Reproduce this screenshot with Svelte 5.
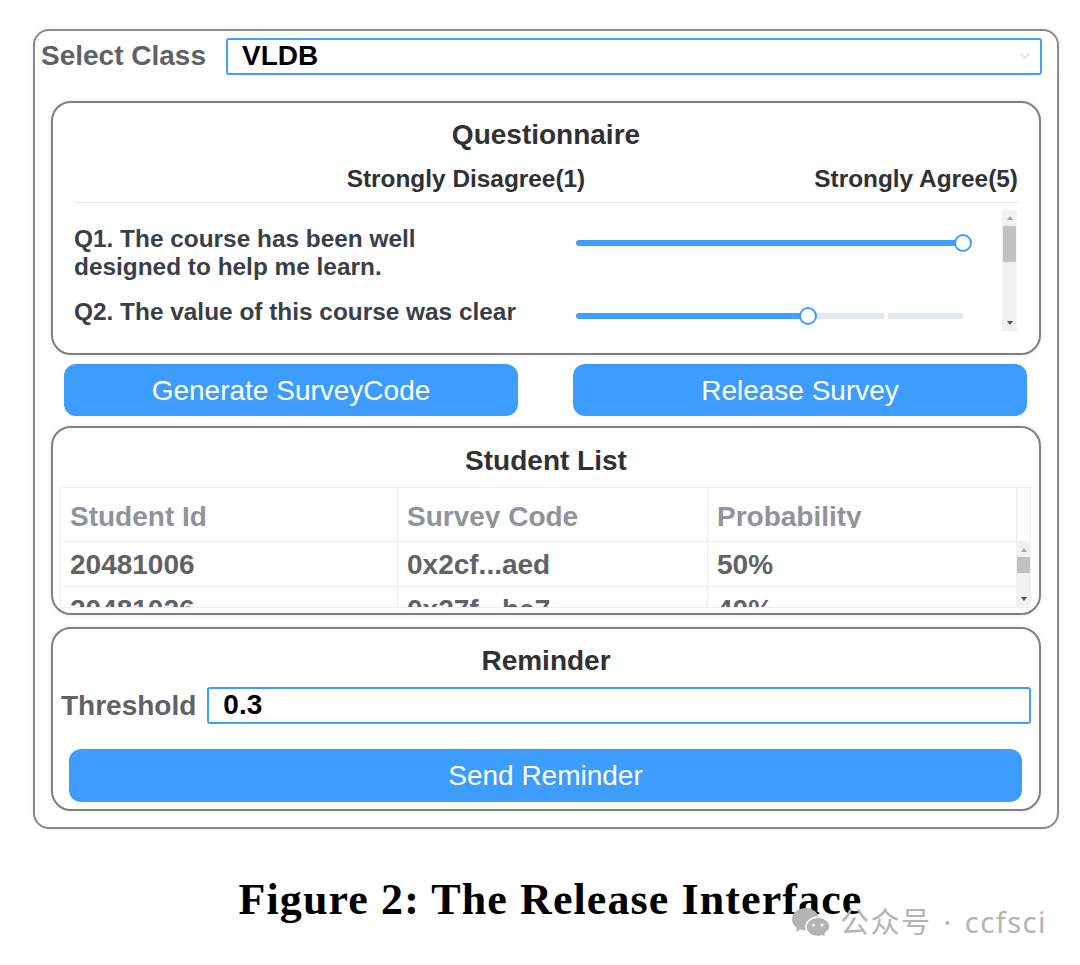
<script lang="ts">
	let selected = $state("VLDB");
	let threshold = $state("0.3");

	const questions = [
		{ lines: ["Q1. The course has been well", "designed to help me learn."], value: 100 },
		{ lines: ["Q2. The value of this course was clear"], value: 60 }
	];

	const students = [
		{ id: "20481006", code: "0x2cf...aed", prob: "50%" },
		{ id: "20481026", code: "0x27f...be7", prob: "40%" }
	];
</script>

<main class="page">
	<div class="panel">
		<div class="class-row">
			<span class="field-label">Select Class</span>
			<div class="select">
				<span>{selected}</span>
				<svg class="chevron" width="12" height="8" viewBox="0 0 12 8">
					<path d="M1.5 1.5 L6 6 L10.5 1.5" fill="none" stroke="#d5d7da" stroke-width="1.2" />
				</svg>
			</div>
		</div>

		<section class="card questionnaire">
			<h3>Questionnaire</h3>
			<div class="scale">
				<span>Strongly Disagree(1)</span>
				<span>Strongly Agree(5)</span>
			</div>
			<div class="q-body">
				<div class="q-list">
					{#each questions as q}
						<div class="q-row">
							<p class="q-text">
								{#each q.lines as line}
									<span>{line}</span>
								{/each}
							</p>
							<div class="slider">
								<div class="track">
									<div class="fill" style="width: {q.value}%"></div>
									{#if q.value < 100}
										<i class="stop" style="left: 79.6%"></i>
									{/if}
								</div>
								<div class="thumb" style="left: {q.value}%"></div>
							</div>
						</div>
					{/each}
				</div>
				<div class="scrollbar q-scroll">
					<span class="arrow up"></span>
					<span class="bar"></span>
					<span class="arrow down"></span>
				</div>
			</div>
		</section>

		<div class="actions">
			<button>Generate SurveyCode</button>
			<button>Release Survey</button>
		</div>

		<section class="card students">
			<h3>Student List</h3>
			<div class="table">
				<div class="thead">
					<div class="cell head"><span>Student Id</span></div>
					<div class="cell head"><span>Survey Code</span></div>
					<div class="cell head"><span>Probability</span></div>
					<div class="cell head gutter"></div>
				</div>
				<div class="tbody">
					<div class="rows">
						{#each students as s}
							<div class="tr">
								<div class="cell">{s.id}</div>
								<div class="cell">{s.code}</div>
								<div class="cell">{s.prob}</div>
							</div>
						{/each}
					</div>
					<div class="scrollbar t-scroll">
						<span class="arrow up"></span>
						<span class="bar"></span>
						<span class="arrow down"></span>
					</div>
				</div>
			</div>
		</section>

		<section class="card reminder">
			<h3>Reminder</h3>
			<div class="threshold-row">
				<span class="field-label">Threshold</span>
				<input class="threshold" bind:value={threshold} />
			</div>
			<button class="send">Send Reminder</button>
		</section>
	</div>

	<h2 class="caption">Figure 2: The Release Interface</h2>

	<div class="watermark">
		<svg width="40" height="30" viewBox="0 0 40 30">
			<path d="M15 1 C7 1 1 6 1 12.500 C1 16 3 19 6 21 L5 25 L9.500 22.500 C11 23 13 23.300 15 23.300 C22 23.300 28 18 28 12 C28 6 22 1 15 1 Z" fill="#b4b4b4" />
			<path d="M27 10 C20.500 10 15 14.500 15 20 C15 25.500 20.500 29.500 27 29.500 C28.500 29.500 30 29.300 31 29 L35 30 L34 26.500 C37 24.500 39 22.500 39 20 C39 14.500 33.500 10 27 10 Z" fill="#b4b4b4" stroke="#fff" stroke-width="1.500" />
			<circle cx="22.500" cy="18" r="1.600" fill="#fff" />
			<circle cx="31" cy="18" r="1.600" fill="#fff" />
		</svg>
		<span>公众号 · ccfsci</span>
	</div>
</main>

<style>
	:global(body) { background: #fff; margin: 0; font-family: "Liberation Sans", Arial, sans-serif; }
	.page { position: relative; width: 1080px; height: 965px; padding: 29px 21px 0 33px; box-sizing: border-box; overflow: hidden; }

	.panel { height: 800px; box-sizing: border-box; border: 2px solid #8a8a8a; border-radius: 16px; padding: 7px 15px 0 6px; box-shadow: 0 0 4px rgba(0,0,0,0.08); }

	.class-row { display: flex; align-items: center; height: 37px; gap: 20px; }
	.field-label { font-size: 28px; font-weight: bold; color: #606266; white-space: nowrap; }
	.class-row .field-label { padding-bottom: 2px; }
	.select { flex: 1; height: 37px; box-sizing: border-box; border: 2px solid #409eff; border-radius: 3px; padding: 0 0 2px 14px; display: flex; align-items: center; justify-content: space-between; font-size: 28px; font-weight: bold; color: #000; }
	.chevron { margin-right: 9px; }

	.card { box-sizing: border-box; width: 990px; margin-left: 10px; background: #fff; border: 2px solid #808080; border-radius: 20px; box-shadow: 0 0 5px rgba(0,0,0,0.1); }
	h3 { margin: 0; text-align: center; font-size: 28px; font-weight: bold; color: #303133; line-height: 32px; }

	.questionnaire { margin-top: 26px; height: 254px; padding: 16px 21px 0; }
	.scale { display: flex; justify-content: flex-end; gap: 229px; height: 28px; padding-top: 14px; padding-bottom: 9px; border-bottom: 1.500px solid #e4e4e4; font-size: 24.400px; font-weight: bold; color: #303133; line-height: 28px; }
	.q-body { display: flex; justify-content: space-between; margin: 7px 1px 0 0; height: 121px; }
	.q-list { width: 900px; box-sizing: border-box; padding: 15px 11px 0 0; overflow: hidden; }
	.q-row { display: flex; justify-content: space-between; align-items: flex-start; margin-bottom: 17px; }
	.q-text { margin: 0; font-size: 24.400px; font-weight: bold; color: #3a3f47; line-height: 28px; }
	.q-text span { display: block; white-space: nowrap; }
	.slider { position: relative; width: 387px; height: 6px; margin-top: 15px; }
	.track { position: relative; height: 6px; background: #e4e7ed; border-radius: 3px; }
	.fill { height: 6px; background: #409eff; border-radius: 3px; }
	.stop { position: absolute; top: 0; width: 4px; height: 6px; background: #fff; }
	.thumb { position: absolute; top: -6px; width: 18px; height: 18px; margin-left: -9px; box-sizing: border-box; border: 2px solid #409eff; border-radius: 50%; background: #fff; }

	.scrollbar { display: flex; flex-direction: column; align-items: center; background: #f1f1f1; box-sizing: border-box; position: relative; }
	.bar { background: #c1c1c1; width: 13px; }
	.arrow { position: absolute; width: 0; height: 0; border-left: 3px solid transparent; border-right: 3px solid transparent; }
	.arrow.up { top: 6px; border-bottom: 4px solid #a3a3a3; }
	.arrow.down { bottom: 6px; border-top: 4px solid #505050; }
	.q-scroll { width: 15px; height: 121px; padding-top: 16px; }
	.q-scroll .bar { height: 36px; }

	.actions { display: flex; justify-content: space-between; width: 963px; margin: 9px 0 10px 23px; }
	button { height: 52px; width: 454px; padding: 1px 0 0; background: #3d9dfc; color: #fff; border: none; border-radius: 12px; font-family: inherit; font-size: 28px; cursor: pointer; }

	.students { height: 189px; padding: 17px 7px 0 7px; }
	.table { margin-top: 10px; border-top: 1px solid #f0f0f2; }
	.thead { display: grid; grid-template-columns: 337px 310px 309px 15px; height: 53px; overflow: hidden; border-bottom: 1px solid #ebeef5; }
	.cell { box-sizing: border-box; padding-left: 9px; border-left: 1px solid #ebeef5; font-size: 28px; font-weight: bold; color: #606266; overflow: hidden; white-space: nowrap; }
	.head { color: #909399; }
	.head span { display: block; height: 40px; line-height: 58px; overflow: hidden; }
	.gutter { border-right: 1px solid #ebeef5; }
	.tbody { display: flex; height: 65px; border-bottom: 1px solid #ebeef5; }
	.rows { width: 956px; overflow: hidden; }
	.tr { display: grid; grid-template-columns: 337px 310px 309px; height: 45px; border-bottom: 1px solid #ebeef5; box-sizing: border-box; line-height: 46px; }
	.t-scroll { width: 15px; height: 65px; padding-top: 15px; }
	.t-scroll .bar { height: 16px; }

	.reminder { margin-top: 12px; height: 184px; padding: 16px 8px 0 8px; }
	.threshold-row { display: flex; align-items: center; gap: 11px; margin-top: 10px; height: 37px; }
	.threshold { flex: 1; min-width: 0; height: 37px; box-sizing: border-box; border: 2px solid #409eff; border-radius: 3px; padding: 0 0 2px 14px; font-family: inherit; font-size: 28px; font-weight: bold; color: #000; outline: none; }
	.send { display: block; width: 953px; height: 53px; margin: 25px 0 0 8px; }

	.caption { margin: 46px 0 0; padding-left: 9px; text-align: center; font-family: "Liberation Serif", "Times New Roman", serif; font-size: 44px; font-weight: bold; letter-spacing: 1.100px; line-height: 50px; color: #000; }

	.watermark { position: absolute; left: 791px; top: 906px; display: flex; align-items: center; gap: 9px; color: #b4b4b4; font-size: 29px; line-height: 32px; white-space: nowrap; }
	.watermark span { font-family: "Noto Sans", "Noto Sans CJK SC", sans-serif; letter-spacing: 1.500px; word-spacing: 3px; }
</style>
